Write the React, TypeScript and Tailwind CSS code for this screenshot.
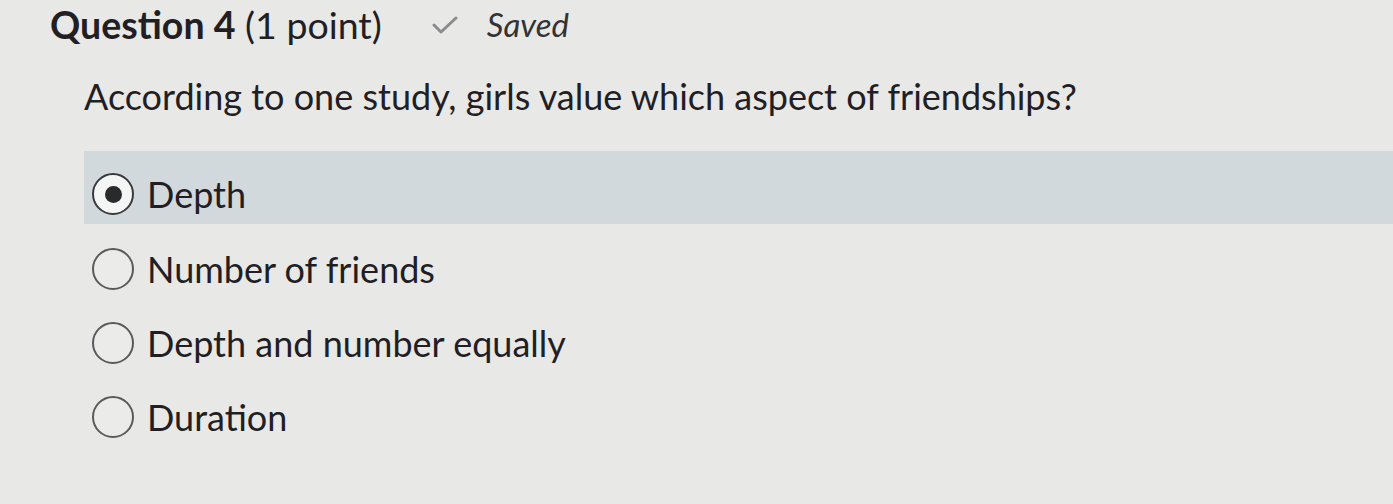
import React from 'react';

const options = ['Depth', 'Number of friends', 'Depth and number equally', 'Duration'];

function Radio({ checked }: { checked: boolean }) {
  return (
    <span
      className={
        checked
          ? 'flex h-[42px] w-[42px] shrink-0 items-center justify-center rounded-full border-2 border-[#3a3a3c] bg-[#f4f5f5]'
          : 'flex h-[42px] w-[42px] shrink-0 items-center justify-center rounded-full border-2 border-[#5a5a5c] bg-[#ebebea]'
      }
    >
      {checked && <span className="h-[17px] w-[17px] rounded-full bg-[#2a2a2c]" />}
    </span>
  );
}

export default function App() {
  const selected = 0;

  return (
    <div className="h-[504px] w-full overflow-hidden bg-[#e8e8e6] font-['Lato','Liberation_Sans',sans-serif] text-[#221e24]">
      <div className="flex items-center pl-[50px] pt-[3px] h-[46px]">
        <h2 className="text-[37.5px] leading-none">
          <span className="font-bold">Question 4</span> <span>(1 point)</span>
        </h2>
        <svg className="ml-[50px] h-[20px] w-[26px]" viewBox="0 0 26 20" fill="none">
          <path d="M2 10 L9 17 L24 3" stroke="#8b8b8d" strokeWidth="3" strokeLinecap="round" strokeLinejoin="round" />
        </svg>
        <span className="ml-[29px] text-[33px] italic leading-none text-[#333235]">Saved</span>
      </div>

      <p className="mt-[32px] pl-[84px] text-[36px] leading-none">
        According to one study, girls value which aspect of friendships?
      </p>

      <div className="mt-[37px] flex flex-col">
        {options.map((opt, i) => (
          <div
            key={opt}
            className={
              i === selected
                ? 'ml-[84px] mb-[8px] flex h-[73px] items-center gap-[13px] bg-[#d2d9dc] pl-[8px] pt-[13px]'
                : 'ml-[84px] flex h-[74px] items-center gap-[13px] pl-[8px]'
            }
          >
            <Radio checked={i === selected} />
            <span className="text-[36px] leading-none">{opt}</span>
          </div>
        ))}
      </div>
    </div>
  );
}
